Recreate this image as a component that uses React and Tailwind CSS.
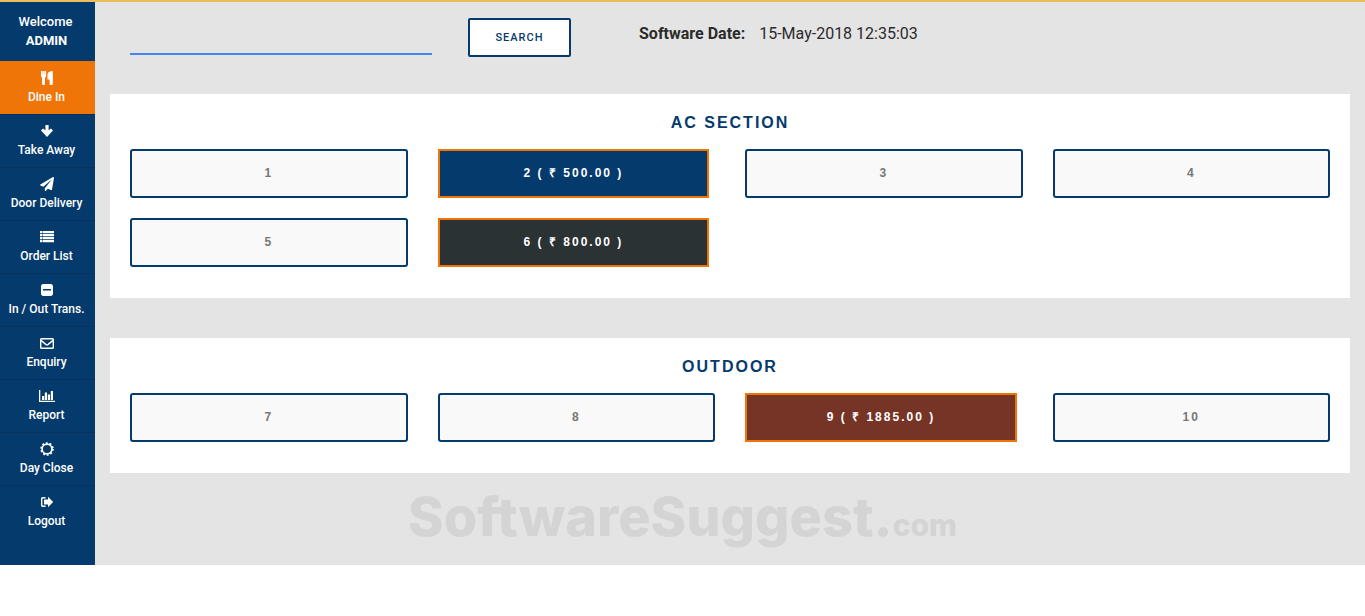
import { FaPaperPlane } from 'react-icons/fa';

const CutleryIcon = () => (
  <svg viewBox="0 0 14 14" className="w-3.5 h-3.5" fill="currentColor" aria-hidden="true">
    <path d="M1 0h1.500v3.600h.3V0h1.500v3.600h.3V0h1.500v4.600c0 1-.4 1.600-1.100 2V13c0 .6-.4 1-1 1h-.9c-.6 0-1-.4-1-1V6.600C1.400 6.200 1 5.600 1 4.600z" />
    <path d="M12.800 0v13c0 .6-.4 1-1 1h-1.200c-.6 0-1-.4-1-1V8.500H7.500V3.600C7.500 1.400 9.500 0 12.800 0z" />
  </svg>
);

const ArrowDownIcon = () => (
  <svg viewBox="0 0 14 14" className="w-3.5 h-3.5" fill="currentColor" aria-hidden="true">
    <path d="M5.400 1h3.200v5.200l2.400-1.600 2 2L7 13 1 6.600l2-2 2.400 1.600z" />
  </svg>
);

const ListIcon = () => (
  <svg viewBox="0 0 14 14" className="w-3.5 h-3.5" fill="currentColor" aria-hidden="true">
    <path d="M0 1h2v2.300H0zM2.500 1H14v2.300H2.500zM0 4h2v2.300H0zM2.500 4H14v2.300H2.500zM0 7h2v2.300H0zM2.500 7H14v2.300H2.500zM0 10h2v2.300H0zM2.500 10H14v2.300H2.500z" />
  </svg>
);

const MinusSquareIcon = () => (
  <svg viewBox="0 0 14 14" className="w-3.5 h-3.5" fill="currentColor" fillRule="evenodd" aria-hidden="true">
    <path d="M3.200 1h7.600C12 1 13 2 13 3.200v7.600c0 1.200-1 2.200-2.200 2.200H3.200C2 13 1 12 1 10.800V3.200C1 2 2 1 3.200 1zM3 6v1.600h8V6z" />
  </svg>
);

const EnvelopeIcon = () => (
  <svg viewBox="0 0 14 14" className="w-3.5 h-3.5" fill="none" stroke="currentColor" strokeWidth="1.400" aria-hidden="true">
    <rect x=".7" y="2.700" width="12.600" height="9.600" rx=".8" />
    <path d="M1 4.400l4.800 4c.8.600 1.600.6 2.400 0L13 4.400" />
  </svg>
);

const BarChartIcon = () => (
  <svg viewBox="0 0 16 14" className="w-4 h-3.5" fill="currentColor" aria-hidden="true">
    <path d="M0 1h1.300v10.800H16V13H0zM3 7h2.200v4H3zM5.800 3.500H8V11H5.800zM8.800 5.500H11V11H8.800zM11.800 2H14v9h-2.200z" />
  </svg>
);

const SunIcon = () => (
  <svg viewBox="0 0 14 14" className="w-3.5 h-3.5" aria-hidden="true">
    <circle cx="7" cy="7" r="4.900" fill="none" stroke="currentColor" strokeWidth="1.700" />
    <circle cx="7" cy="7" r="6" fill="none" stroke="currentColor" strokeWidth="1.600" strokeDasharray="1.900 1.870" />
  </svg>
);

const LogoutIcon = () => (
  <svg viewBox="0 0 14 14" className="w-3.5 h-3.5" fill="currentColor" aria-hidden="true">
    <path d="M5.500 2v1.400H3c-.4 0-.6.2-.6.600v6c0 .4.2.6.600.6h2.500V12H2.800C1.700 12 1 11.300 1 10.200V3.800C1 2.700 1.700 2 2.800 2z" />
    <path d="M8 1.800L13.200 7 8 12.200V9.600H4V4.400h4z" />
  </svg>
);

const menu = [
  { label: 'Dine In', icon: CutleryIcon, active: true },
  { label: 'Take Away', icon: ArrowDownIcon },
  { label: 'Door Delivery', icon: FaPaperPlane },
  { label: 'Order List', icon: ListIcon },
  { label: 'In / Out Trans.', icon: MinusSquareIcon },
  { label: 'Enquiry', icon: EnvelopeIcon },
  { label: 'Report', icon: BarChartIcon },
  { label: 'Day Close', icon: SunIcon },
  { label: 'Logout', icon: LogoutIcon },
];

const sections = [
  {
    title: 'AC SECTION',
    tables: [
      { no: 1 },
      { no: 2, amount: '500.00', color: 'bg-[#053a6c]' },
      { no: 3 },
      { no: 4 },
      { no: 5 },
      { no: 6, amount: '800.00', color: 'bg-[#2b3233]' },
    ],
  },
  {
    title: 'OUTDOOR',
    tables: [
      { no: 7 },
      { no: 8 },
      { no: 9, amount: '1885.00', color: 'bg-[#753426]' },
      { no: 10 },
    ],
  },
];

const Sidebar = () => (
  <nav className="w-[95px] shrink-0 bg-[#053a6c] text-white text-center">
    <div className="h-[59px] pt-2.5 pr-1 text-[13px] leading-[19px]">
      <p className="font-medium">Welcome</p>
      <p className="pl-0.5 font-bold">ADMIN</p>
    </div>
    {menu.map(({ label, icon: Icon, active }) => (
      <a
        key={label}
        href="#"
        className={`flex flex-col items-center h-[53px] pt-[9px] pr-0.5 border-t whitespace-nowrap ${active ? 'bg-[#f07509] border-[#f07509]' : 'border-[#04335f]'}`}
      >
        <Icon className="w-3.5 h-3.5" />
        <span className="mt-0.5 text-xs leading-5 font-medium">{label}</span>
      </a>
    ))}
  </nav>
);

const TableButton = ({ table }) => {
  if (table.amount) {
    return (
      <button
        type="button"
        className={`w-[98%] h-[49px] pb-0.5 border-2 border-[#f07509] text-xs font-bold tracking-[2px] text-white ${table.color}`}
      >
        {table.no} ( ₹ {table.amount} )
      </button>
    );
  }

  return (
    <button
      type="button"
      className="w-full h-[49px] pb-0.5 border-2 border-[#053a6c] rounded-[3px] bg-[#f9f9f9] text-xs font-bold tracking-[2px] text-[#777]"
    >
      {table.no}
    </button>
  );
};

const Section = ({ section }) => (
  <section className="bg-white px-5 pt-[17px] pb-[31px] font-['Liberation_Sans',Arial,sans-serif]">
    <h2 className="mb-3.5 text-center text-base leading-6 font-bold tracking-[2px] text-[#053a6c]">
      {section.title}
    </h2>
    <div className="grid grid-cols-4 gap-x-[30px] gap-y-5">
      {section.tables.map((table) => (
        <TableButton key={table.no} table={table} />
      ))}
    </div>
  </section>
);

const App = () => {
  return (
    <div className="min-h-screen bg-white font-[Roboto,sans-serif]">
      <div className="relative flex border-t-2 border-[#edbd5c] bg-[#e4e4e4]">
        <Sidebar />

        <main className="flex-1 px-[15px] pb-[92px]">
          <form className="flex items-start h-[92px] pl-5 pt-4" onSubmit={(e) => e.preventDefault()}>
            <input
              type="text"
              aria-label="Search"
              className="w-[302px] h-[37px] border-b-2 border-[#4285f4] bg-transparent text-sm outline-none"
            />
            <button
              type="submit"
              className="ml-9 w-[103px] h-[39px] pt-0.5 border-2 border-[#053a6c] rounded-[2px] bg-white text-[11px] font-medium tracking-[1px] text-[#053a6c]"
            >
              SEARCH
            </button>
            <p className="ml-[68px] mt-1 flex gap-3.5 text-base leading-6 text-[#2b2b2b]">
              <span className="font-bold">Software Date:</span>
              <time>15-May-2018 12:35:03</time>
            </p>
          </form>

          <div className="flex flex-col gap-10">
            {sections.map((section) => (
              <Section key={section.title} section={section} />
            ))}
          </div>
        </main>

        <p className="absolute inset-x-0 bottom-1 text-center font-[Inter,sans-serif] text-[54px] leading-[72px] font-extrabold text-[#d4d4d4] pointer-events-none">
          SoftwareSuggest.<span className="text-[30px]">com</span>
        </p>
      </div>
    </div>
  );
};

export default App;
